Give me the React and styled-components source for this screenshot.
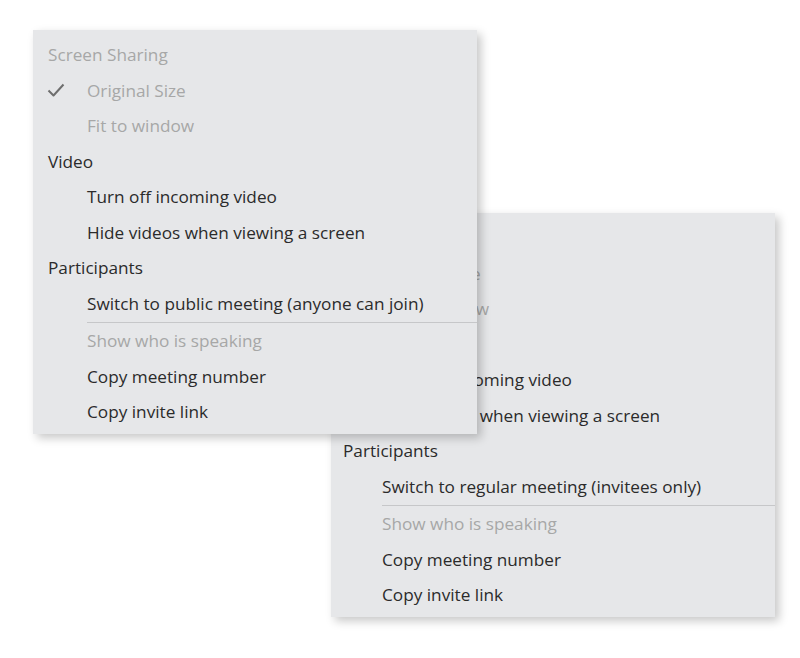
import styled, { createGlobalStyle } from 'styled-components';

const GlobalStyle = createGlobalStyle`
  html, body {
    margin: 0;
    padding: 0;
    background: #ffffff;
  }
  body {
    font-family: 'Open Sans', 'Noto Sans', sans-serif;
  }
`;

const Stage = styled.div`
  position: relative;
  width: 800px;
  height: 658px;
  overflow: hidden;
  padding: 213px 0 0 331px;
  box-sizing: border-box;
`;

const Menu = styled.div`
  width: 444px;
  box-sizing: border-box;
  padding: 7px 0 4px ${(p) => p.$inset}px;
  background: #e6e7e9;
  box-shadow: 4px 4px 9px rgba(0, 0, 0, 0.22);
  font-size: 17.2px;
  color: #2b2b2b;
`;

// the menu that was opened last sits on top of the other one
const FrontMenu = styled(Menu)`
  position: absolute;
  top: 30px;
  left: 33px;
  z-index: 2;
`;

const Header = styled.div`
  height: 35.5px;
  display: flex;
  align-items: center;
  color: ${(p) => (p.$muted ? '#a7a7a7' : '#2b2b2b')};
`;

const Item = styled.div`
  height: 35.5px;
  display: grid;
  grid-template-columns: 39px 1fr;
  align-items: center;
  color: ${(p) => (p.$muted ? '#a7a7a7' : '#2b2b2b')};
  white-space: nowrap;
`;

const CheckSlot = styled.span`
  display: flex;
  align-items: center;
  margin-left: -1px;
`;

const Divider = styled.div`
  height: 1px;
  margin: 0.5px 0 0.5px 39px;
  background: #c6c7c9;
`;

function Check() {
  return (
    <svg width="18" height="14" viewBox="0 0 18 14">
      <polyline
        points="1.5,7.5 6.5,12.5 16.5,1.5"
        fill="none"
        stroke="#6e6e6e"
        strokeWidth="2"
        strokeLinejoin="round"
      />
    </svg>
  );
}

const MeetingMenu = ({ as, inset, switchLabel }) => (
  <Menu as={as} $inset={inset}>
    <Header $muted>Screen Sharing</Header>
    <Item $muted>
      <CheckSlot>
        <Check />
      </CheckSlot>
      <span>Original Size</span>
    </Item>
    <Item $muted>
      <span />
      <span>Fit to window</span>
    </Item>
    <Header>Video</Header>
    <Item>
      <span />
      <span>Turn off incoming video</span>
    </Item>
    <Item>
      <span />
      <span>Hide videos when viewing a screen</span>
    </Item>
    <Header>Participants</Header>
    <Item>
      <span />
      <span>{switchLabel}</span>
    </Item>
    <Divider />
    <Item $muted>
      <span />
      <span>Show who is speaking</span>
    </Item>
    <Item>
      <span />
      <span>Copy meeting number</span>
    </Item>
    <Item>
      <span />
      <span>Copy invite link</span>
    </Item>
  </Menu>
);

export default function App() {
  return (
    <Stage>
      <GlobalStyle />
      <MeetingMenu as={FrontMenu} inset={15} switchLabel="Switch to public meeting (anyone can join)" />
      <MeetingMenu inset={12} switchLabel="Switch to regular meeting (invitees only)" />
    </Stage>
  );
}
